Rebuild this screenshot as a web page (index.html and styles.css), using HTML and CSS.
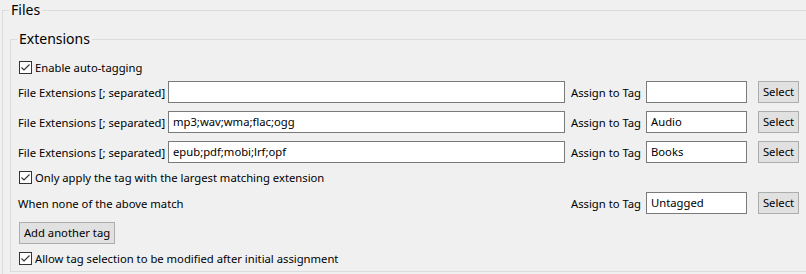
FILE: index.html
```html
<!DOCTYPE html>
<html>
<head>
<meta charset="utf-8">
<link rel="stylesheet" href="styles.css">
</head>
<body>
<div class="page">
  <fieldset class="group outer">
    <legend>Files</legend>
    <fieldset class="group inner">
      <legend>Extensions</legend>
      <div class="content">
        <div class="check cb1">
          <span class="box"><svg width="13" height="13" viewBox="0 0 13 13"><rect x="0.5" y="0.5" width="12" height="12" fill="#fff" stroke="#333"/><polyline points="2.5,6.5 5,9 10.5,3.5" fill="none" stroke="#333" stroke-width="1.1"/></svg></span>
          <span>Enable auto-tagging</span>
        </div>
        <div class="row r1">
          <span class="lbl">File Extensions [; separated]</span>
          <span class="input wide"></span>
          <span class="assign">Assign to Tag</span>
          <span class="input tag"></span>
          <span class="btn select">Select</span>
        </div>
        <div class="row r2">
          <span class="lbl">File Extensions [; separated]</span>
          <span class="input wide">mp3;wav;wma;flac;ogg</span>
          <span class="assign">Assign to Tag</span>
          <span class="input tag">Audio</span>
          <span class="btn select">Select</span>
        </div>
        <div class="row r2">
          <span class="lbl">File Extensions [; separated]</span>
          <span class="input wide">epub;pdf;mobi;lrf;opf</span>
          <span class="assign">Assign to Tag</span>
          <span class="input tag">Books</span>
          <span class="btn select">Select</span>
        </div>
        <div class="check cb2">
          <span class="box"><svg width="13" height="13" viewBox="0 0 13 13"><rect x="0.5" y="0.5" width="12" height="12" fill="#fff" stroke="#333"/><polyline points="2.5,6.5 5,9 10.5,3.5" fill="none" stroke="#333" stroke-width="1.1"/></svg></span>
          <span>Only apply the tag with the largest matching extension</span>
        </div>
        <div class="row r-none">
          <span class="lbl-none">When none of the above match</span>
          <span class="assign">Assign to Tag</span>
          <span class="input tag">Untagged</span>
          <span class="btn select">Select</span>
        </div>
        <div class="row r-btn">
          <span class="btn add">Add another tag</span>
        </div>
        <div class="check cb3">
          <span class="box"><svg width="13" height="13" viewBox="0 0 13 13"><rect x="0.5" y="0.5" width="12" height="12" fill="#fff" stroke="#333"/><polyline points="2.5,6.5 5,9 10.5,3.5" fill="none" stroke="#333" stroke-width="1.1"/></svg></span>
          <span>Allow tag selection to be modified after initial assignment</span>
        </div>
      </div>
    </fieldset>
  </fieldset>
</div>
</body>
</html>
```

FILE: styles.css
```css
html, body {
  margin: 0;
  padding: 0;
  background: #f0f0f0;
}
body {
  font-family: "Noto Sans", "Open Sans", sans-serif;
  font-size: 11.25px;
  color: #000;
  overflow: hidden;
}
.page {
  width: 806px;
  height: 274px;
  overflow: hidden;
}
.group {
  border: 1px solid #dcdcdc;
  margin: 0;
  padding: 0;
  min-width: 0;
}
.group > legend {
  font-size: 14px;
  line-height: 20px;
  padding: 0 2px;
  margin-left: -1px;
  color: #000;
}
.outer {
  margin-left: 2px;
  width: 900px;
  padding: 0 0 20px 7px;
}
.inner {
  margin-top: 9px;
  padding: 0 0 3px 7px;
}
.content {
  display: flex;
  flex-direction: column;
  padding-top: 8px;
}
.check {
  display: flex;
  align-items: center;
  height: 20px;
}
.box {
  display: flex;
  width: 13px;
  height: 13px;
  margin-left: 1px;
  margin-right: 3px;
}
.cb2 { margin-top: 4px; }
.cb3 { margin-top: 4px; }
.row {
  display: flex;
  align-items: center;
  height: 22px;
}
.r1 { margin-top: 4px; }
.r2 { margin-top: 8px; }
.r-none { margin-top: 5px; }
.r-btn { margin-top: 8px; }
.lbl {
  width: 150px;
  white-space: nowrap;
}
.lbl-none {
  width: 547px;
  white-space: nowrap;
}
.input {
  box-sizing: border-box;
  height: 22px;
  border: 1px solid #7a7a7a;
  background: #fff;
  padding: 0 4px;
  line-height: 20px;
  white-space: nowrap;
}
.wide { width: 397px; }
.tag { width: 101px; }
.assign {
  margin-left: 6px;
  width: 75px;
  white-space: nowrap;
}
.btn {
  box-sizing: border-box;
  height: 22px;
  border: 1px solid #adadad;
  background: #e1e1e1;
  line-height: 20px;
  text-align: center;
  white-space: nowrap;
}
.select {
  margin-left: 11px;
  width: 41px;
}
.add {
  margin-left: 1px;
  width: 96px;
}
```
